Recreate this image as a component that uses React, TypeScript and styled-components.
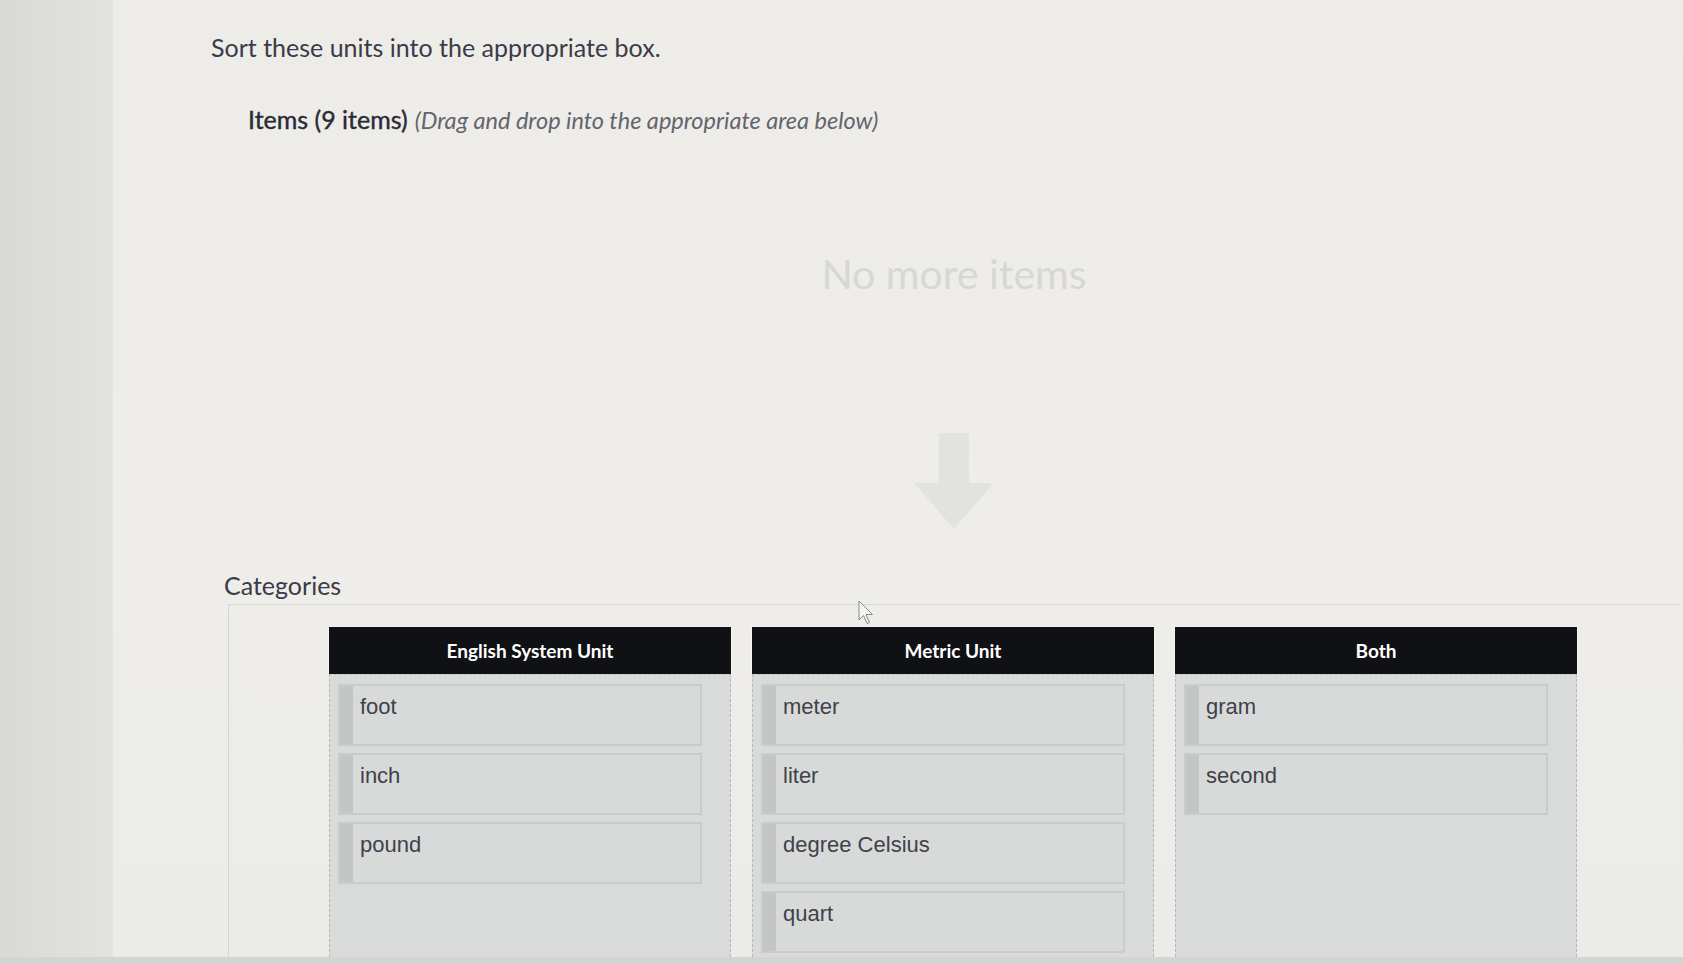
import styled, { createGlobalStyle } from 'styled-components';

const GlobalStyle = createGlobalStyle`
	html, body {
		margin: 0;
		padding: 0;
		background: #ecebe8;
	}
	body {
		font-family: Lato, "Open Sans", sans-serif;
		overflow: hidden;
	}
`;

interface Category {
	title: string;
	items: string[];
}

const categories: Category[] = [
	{ title: 'English System Unit', items: ['foot', 'inch', 'pound'] },
	{ title: 'Metric Unit', items: ['meter', 'liter', 'degree Celsius', 'quart'] },
	{ title: 'Both', items: ['gram', 'second'] },
];

const Screen = styled.div`
	width: 1683px;
	height: 964px;
	display: flex;
	flex-direction: column;
	overflow: hidden;
	position: relative;
`;

const Body = styled.div`
	flex: 1;
	display: flex;
	min-height: 0;
`;

const Sidebar = styled.div`
	width: 113px;
	flex-shrink: 0;
	background: linear-gradient(90deg, #d9dad7 0%, #e0e0dd 80%, #e3e3e0 100%);
`;

const Main = styled.div`
	flex: 1;
	padding: 33px 0 0 98px;
	display: flex;
	flex-direction: column;
	min-width: 0;
	background: linear-gradient(180deg, #edece9 0%, #eeede9 60%, #ebebe8 100%);
`;

const Prompt = styled.div`
	font-size: 25px;
	line-height: 28px;
	color: #3b3b47;
`;

const ItemsHeading = styled.div`
	margin: 44px 0 0 37px;
	font-size: 25px;
	line-height: 28px;
	color: #2b2b36;
	-webkit-text-stroke: 0.4px #2b2b36;

	em {
		-webkit-text-stroke: 0;
		color: #64646c;
		font-size: 23.5px;
		margin-left: 7px;
	}
`;

const Pool = styled.div`
	margin-left: 17px;
	width: 1452px;
	height: 437px;
	display: flex;
	flex-direction: column;
	align-items: center;
`;

const EmptyText = styled.div`
	margin-top: 115px;
	font-size: 41px;
	line-height: 50px;
	color: #d7d7d5;
`;

const ArrowIcon = styled.svg`
	margin-top: 134px;
	display: block;
`;

const CategoriesLabel = styled.div`
	margin-left: 13px;
	font-size: 25px;
	line-height: 28px;
	color: #3b3b47;
`;

const CategoriesBox = styled.div`
	margin: 5px 0 0 17px;
	width: 1452px;
	flex: 1;
	border-top: 1px solid #d7d7d4;
	border-left: 1px solid #d4d4d1;
	padding: 22px 0 0 100px;
	display: grid;
	grid-template-columns: repeat(3, 402px);
	column-gap: 21px;
	box-sizing: border-box;
`;

const Column = styled.div`
	display: flex;
	flex-direction: column;
`;

const ColumnHeader = styled.div`
	height: 47px;
	background: #101115;
	color: #ffffff;
	font-weight: 700;
	font-size: 19px;
	display: flex;
	align-items: center;
	justify-content: center;
	box-shadow: 0 0 0 1px #f4f4f2;
`;

const DropZone = styled.div`
	flex: 1;
	background: #d9dbda;
	border: 1px dashed #b7b9b8;
	border-top: 1px dashed #c4c6c5;
	border-bottom: none;
	padding: 9px 28px 0 8px;
	display: flex;
	flex-direction: column;
	gap: 7px;
`;

const Tile = styled.div`
	height: 62px;
	display: flex;
	background: #d8dad9;
	border: 2px solid #cacccb;
	box-sizing: border-box;
`;

const Handle = styled.div`
	width: 13px;
	background: #c4c6c5;
	flex-shrink: 0;
`;

const TileLabel = styled.div`
	padding: 7px 0 0 7px;
	font-family: "Liberation Sans", Arial, sans-serif;
	font-size: 22px;
	line-height: 28px;
	color: #40414b;
`;

const BottomBar = styled.div`
	height: 7px;
	background: #d4d5d2;
`;

const Cursor = styled.svg`
	position: absolute;
	left: 858px;
	top: 600px;
`;

export default function App() {
	return (
		<>
			<GlobalStyle />
			<Screen>
				<Body>
					<Sidebar />
					<Main>
						<Prompt>Sort these units into the appropriate box.</Prompt>
						<ItemsHeading>
							Items (9 items)<em>(Drag and drop into the appropriate area below)</em>
						</ItemsHeading>
						<Pool>
							<EmptyText>No more items</EmptyText>
							<ArrowIcon width="80" height="96" viewBox="0 0 80 96">
								<path d="M25 0 H55 V50 H80 L40 96 L0 50 H25 Z" fill="#e2e2e0" />
							</ArrowIcon>
						</Pool>
						<CategoriesLabel>Categories</CategoriesLabel>
						<CategoriesBox>
							{categories.map((cat) => (
								<Column key={cat.title}>
									<ColumnHeader>{cat.title}</ColumnHeader>
									<DropZone>
										{cat.items.map((item) => (
											<Tile key={item}>
												<Handle />
												<TileLabel>{item}</TileLabel>
											</Tile>
										))}
									</DropZone>
								</Column>
							))}
						</CategoriesBox>
					</Main>
				</Body>
				<BottomBar />
				<Cursor width="18" height="26" viewBox="0 0 18 26">
					<path d="M1 1 L1 20 L5.5 15.5 L9 23.5 L11.5 22.5 L8 14.5 L14.5 14.5 Z" fill="#f4f4f2" stroke="#8a8a8a" strokeWidth="1" strokeLinejoin="round" />
				</Cursor>
			</Screen>
		</>
	);
}
